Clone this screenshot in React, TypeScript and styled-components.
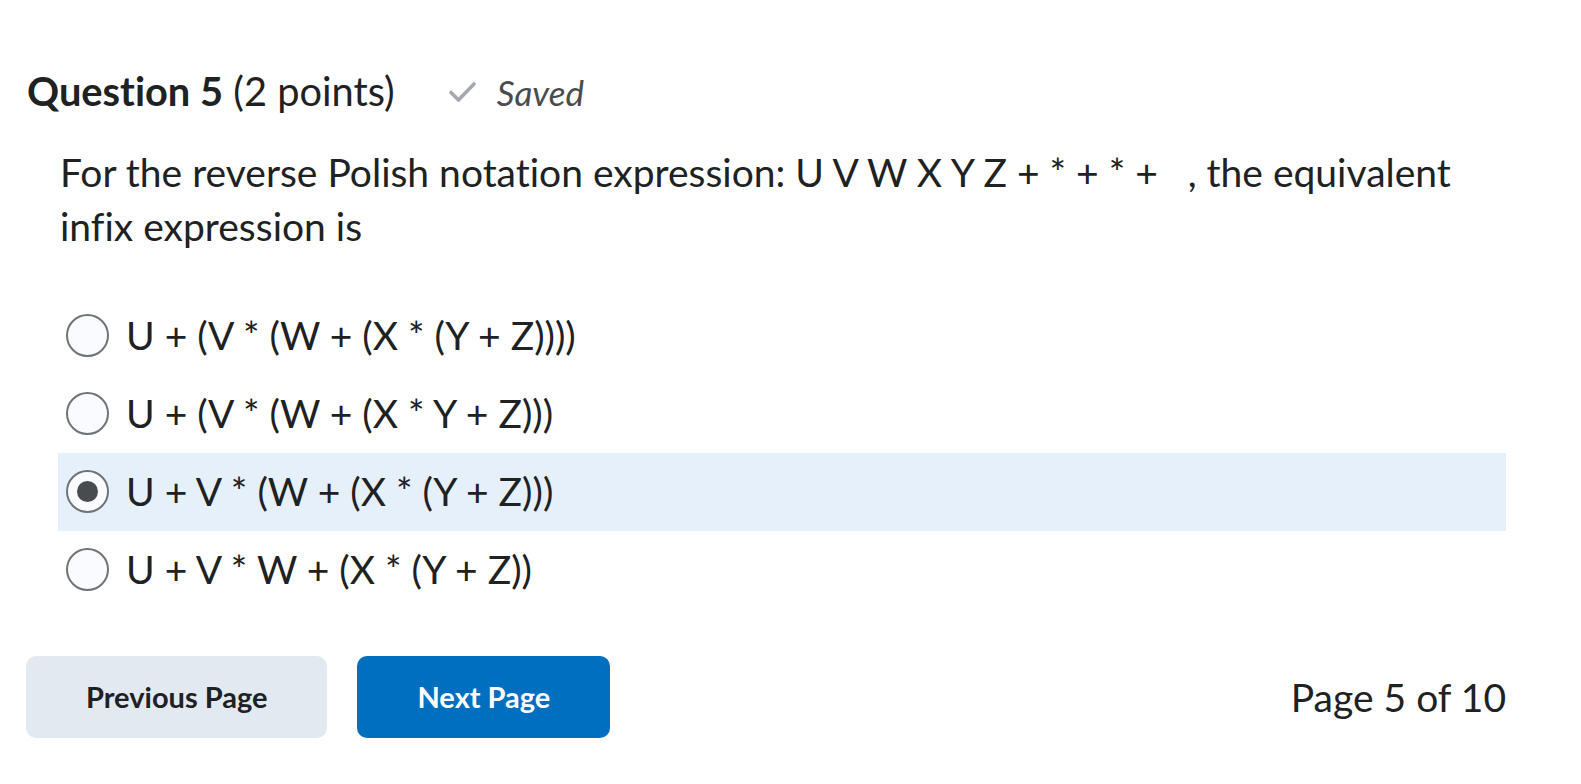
import React, { useState } from 'react';
import styled, { createGlobalStyle } from 'styled-components';

const GlobalStyle = createGlobalStyle`
  html, body {
    margin: 0;
    padding: 0;
    background: #ffffff;
  }
  body {
    font-family: Lato, 'Noto Sans', 'Liberation Sans', sans-serif;
    font-variant-ligatures: none;
    color: #202122;
  }
`;

const options = [
  'U + (V * (W + (X * (Y + Z))))',
  'U + (V * (W + (X * Y + Z)))',
  'U + V * (W + (X * (Y + Z)))',
  'U + V * W + (X * (Y + Z))',
];

const App = () => {
  const [selected, setSelected] = useState(2);

  return (
    <>
      <GlobalStyle />
      <Page>
        <Header>
          <Title>
            <strong>Question 5</strong> (2 points)
          </Title>
          <SavedStatus>
            <svg width="29" height="23" viewBox="0 0 29 23" fill="none">
              <path
                d="M3 12.5 L10.5 20 L26 4"
                stroke="#a3a9ae"
                strokeWidth="3.6"
                strokeLinecap="round"
                strokeLinejoin="round"
              />
            </svg>
            <span>Saved</span>
          </SavedStatus>
        </Header>

        <Prompt>
          For the reverse Polish notation expression: U V W X Y Z + * + * +&nbsp;&nbsp;&nbsp;, the equivalent
          <br />
          infix expression is
        </Prompt>

        <OptionList>
          {options.map((text, i) => (
            <OptionRow key={text} $active={selected === i} onClick={() => setSelected(i)}>
              <Radio $checked={selected === i} />
              <OptionText>{text}</OptionText>
            </OptionRow>
          ))}
        </OptionList>

        <Footer>
          <ButtonGroup>
            <NavButton>Previous Page</NavButton>
            <NavButton $primary>Next Page</NavButton>
          </ButtonGroup>
          <PageCount>Page 5 of 10</PageCount>
        </Footer>
      </Page>
    </>
  );
};

export default App;

const Page = styled.div`
  width: 1506px;
  padding-top: 67px;
`;

const Header = styled.div`
  display: flex;
  align-items: center;
  gap: 53px;
  padding-left: 27px;
`;

const Title = styled.h2`
  margin: 0;
  font-size: 39.8px;
  font-weight: 400;
  line-height: 1.2;
  color: #202122;

  strong {
    font-weight: 700;
  }
`;

const SavedStatus = styled.div`
  display: flex;
  align-items: center;
  gap: 20px;
  font-size: 35px;
  font-style: italic;
  color: #494c4e;
  padding-top: 2px;
`;

const Prompt = styled.p`
  margin: 30px 0 0;
  padding-left: 60px;
  font-size: 39px;
  line-height: 54px;
  color: #202122;
`;

const OptionList = styled.div`
  display: flex;
  flex-direction: column;
  margin: 44px 0 0 58px;
`;

const OptionRow = styled.label<{ $active: boolean }>`
  display: flex;
  align-items: center;
  gap: 17px;
  height: 78px;
  padding-left: 8px;
  background: ${(p) => (p.$active ? '#e6f0fb' : 'transparent')};
  cursor: pointer;
`;

const Radio = styled.span<{ $checked: boolean }>`
  position: relative;
  box-sizing: border-box;
  width: 43px;
  height: 43px;
  border-radius: 50%;
  border: 2px solid #6e7477;
  background: #f9fbff;
  flex-shrink: 0;

  &::after {
    content: '';
    display: ${(p) => (p.$checked ? 'block' : 'none')};
    position: absolute;
    top: 50%;
    left: 50%;
    width: 21px;
    height: 21px;
    margin: -10.5px 0 0 -10.5px;
    border-radius: 50%;
    background: #494c4e;
  }
`;

const OptionText = styled.span`
  font-size: 39px;
  line-height: 1.2;
  color: #202122;
`;

const Footer = styled.div`
  display: flex;
  align-items: center;
  justify-content: space-between;
  margin-top: 47px;
  padding-left: 26px;
`;

const ButtonGroup = styled.div`
  display: flex;
  gap: 30px;
`;

const NavButton = styled.button<{ $primary?: boolean }>`
  height: 82px;
  padding: 0 60px;
  border: none;
  border-radius: 10px;
  font-family: Lato, 'Noto Sans', 'Liberation Sans', sans-serif;
  font-variant-ligatures: none;
  font-size: 29px;
  font-weight: 700;
  background: ${(p) => (p.$primary ? '#006fbf' : '#e3e9f1')};
  color: ${(p) => (p.$primary ? '#ffffff' : '#202122')};
  cursor: pointer;
`;

const PageCount = styled.div`
  font-size: 39px;
  color: #202122;
`;
